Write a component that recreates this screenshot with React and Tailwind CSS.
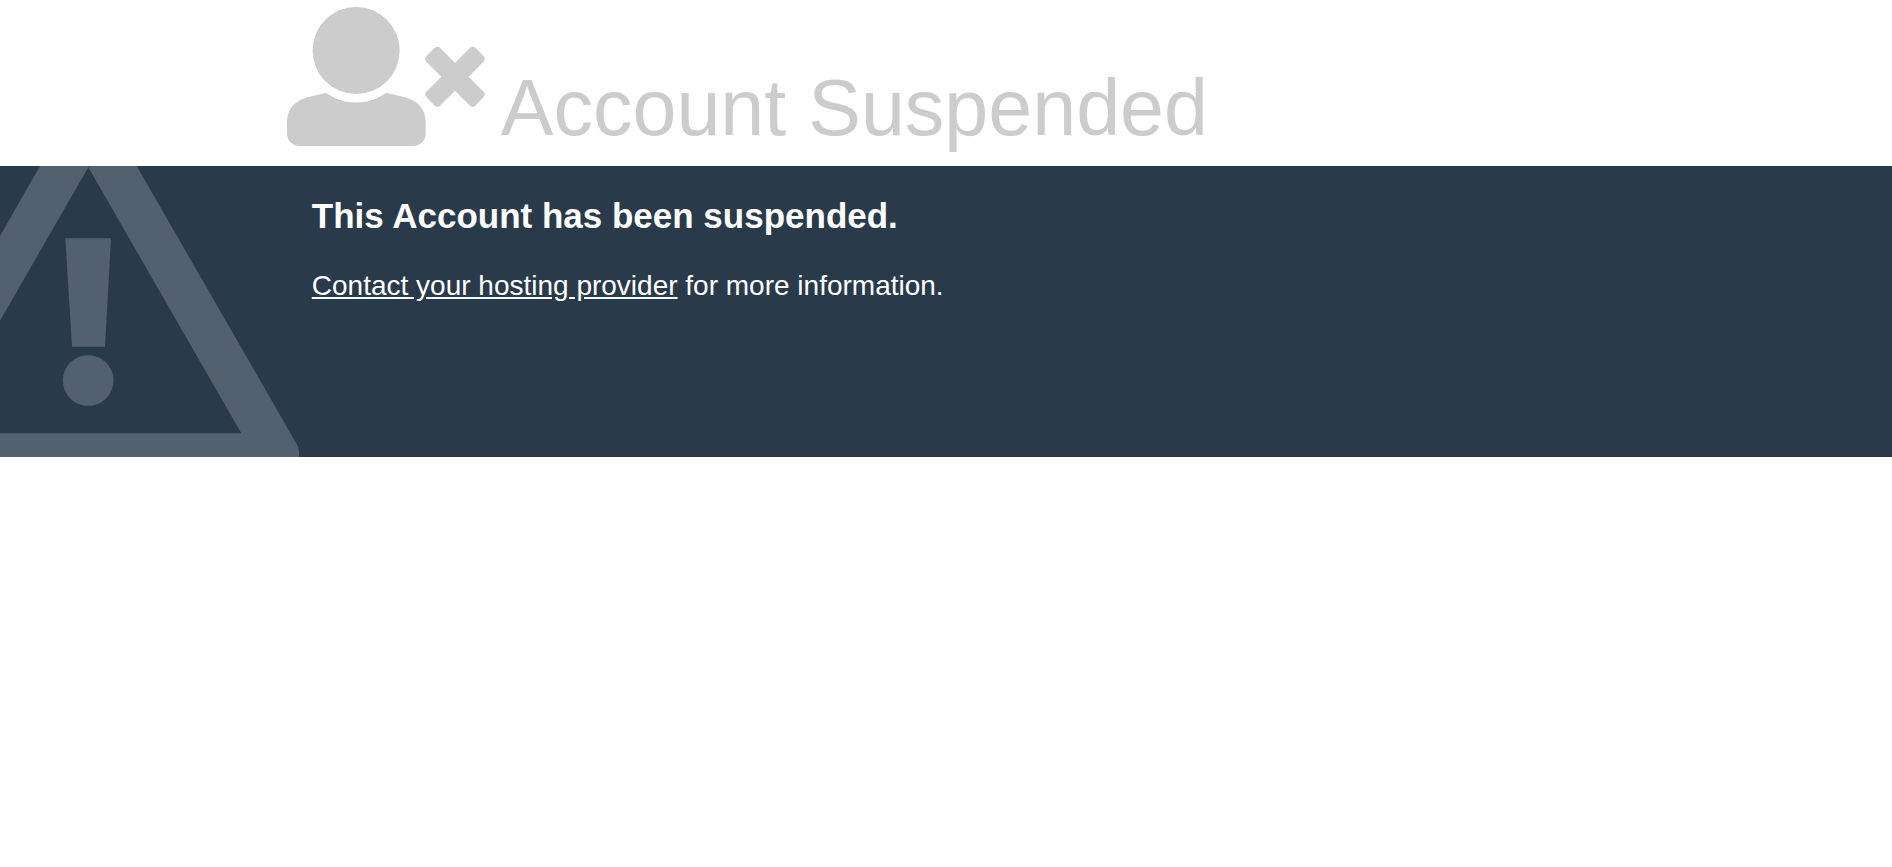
function UserTimesIcon() {
  return (
    <svg
      viewBox="42 0 603 438"
      className="mb-2 h-[146px] w-[201px] shrink-0 fill-current"
      aria-hidden="true"
    >
      <circle cx="258.5" cy="151.5" r="130.5" />
      <path d="M168 278C222 317 295 317 349 278L405 292C443 301 467 329 467 366V400C467 422 451 438 429 438H89C67 438 51 422 51 400V366C51 329 75 301 113 292Z" />
      <path d="M494 143Q502 137 510 143L555 188L600 143Q608 137 616 143L641 169Q648 177 641 185L596 230L641 275Q648 283 641 291L616 317Q608 324 600 317L555 272L510 317Q502 324 494 317L469 291Q462 283 469 275L514 230L469 185Q462 177 469 169Z" />
    </svg>
  );
}

function WarningIcon() {
  return (
    <svg
      viewBox="0 48 900 873"
      className="absolute bottom-0 left-0 h-[291px] w-[300px] fill-white/20"
      aria-hidden="true"
    >
      <path
        fillRule="evenodd"
        d="M120 48H410L886 875Q897 890 897 912V921H0V850H724L265 52L0 512V258Z"
      />
      <path d="M196 265H333L315 590H216Z" />
      <circle cx="264.5" cy="691.5" r="76" />
    </svg>
  );
}

export default function App() {
  return (
    <div className="min-h-screen bg-white font-['Liberation_Sans',Arial,sans-serif]">
      <header className="flex items-end gap-4 px-[15%] pb-3 text-[#cccccc]">
        <UserTimesIcon />
        <h1 className="text-[79px] leading-[92px]">Account Suspended</h1>
      </header>
      <main className="relative overflow-hidden bg-[#293a4a] px-[15%] pt-7 pb-[153px] text-white">
        <WarningIcon />
        <div className="relative flex flex-col gap-[30px] px-7">
          <h2 className="text-[35px] leading-[44px] font-bold">
            This Account has been suspended.
          </h2>
          <p className="text-[28px] leading-[36px]">
            <a href="#contact" className="underline">
              Contact your hosting provider
            </a>{" "}
            for more information.
          </p>
        </div>
      </main>
    </div>
  );
}
